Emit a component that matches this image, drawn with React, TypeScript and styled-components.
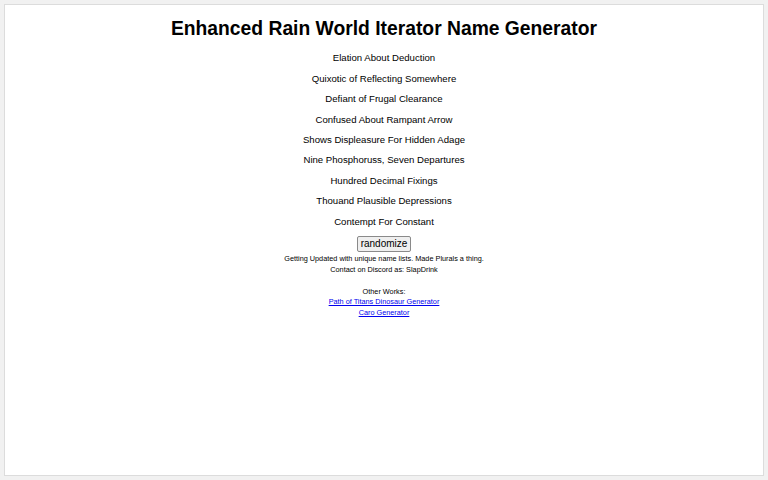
import React from "react";
import styled, { createGlobalStyle } from "styled-components";

const GlobalStyle = createGlobalStyle`
  html, body {
    margin: 0;
    padding: 0;
  }
  body {
    background: #f1f1f1;
    padding: 4px;
    font-family: "Liberation Sans", Arial, sans-serif;
    color: #000;
  }
`;

const Card = styled.main`
  box-sizing: border-box;
  height: calc(100vh - 8px);
  background: #fff;
  border: 1px solid #dcdcdc;
  padding-top: 12px;
  display: flex;
  flex-direction: column;
  align-items: center;
  text-align: center;
`;

const Title = styled.h1`
  margin: 0;
  font-size: 19.3px;
  line-height: 24px;
  font-weight: bold;
`;

const NameList = styled.div`
  margin-top: 7.3px;
  display: flex;
  flex-direction: column;
  align-items: center;
`;

const NameLine = styled.div`
  font-size: 9.6px;
  line-height: 20.4px;
`;

const Button = styled.button`
  margin-top: 4px;
  font-family: "Liberation Sans", Arial, sans-serif;
  font-size: 10px;
  line-height: 12px;
  padding: 1px 3px;
  color: #000;
  background: #efefef;
  border: 1px solid #8a8a8a;
  border-radius: 2px;
  cursor: pointer;
`;

const Note = styled.div<{ $gap?: number }>`
  margin-top: ${(p) => p.$gap ?? 0}px;
  font-size: 7.3px;
  line-height: 10.6px;
`;

const Link = styled.a`
  color: #0000ee;
  text-decoration: underline;
`;

const names = [
  "Elation About Deduction",
  "Quixotic of Reflecting Somewhere",
  "Defiant of Frugal Clearance",
  "Confused About Rampant Arrow",
  "Shows Displeasure For Hidden Adage",
  "Nine Phosphoruss, Seven Departures",
  "Hundred Decimal Fixings",
  "Thouand Plausible Depressions",
  "Contempt For Constant",
];

export default function App() {
  return (
    <>
      <GlobalStyle />
      <Card>
        <Title>Enhanced Rain World Iterator Name Generator</Title>
        <NameList>
          {names.map((n) => (
            <NameLine key={n}>{n}</NameLine>
          ))}
        </NameList>
        <Button type="button">randomize</Button>
        <Note $gap={2.5}>
          Getting Updated with unique name lists. Made Plurals a thing.
          <br />
          Contact on Discord as: SlapDrink
        </Note>
        <Note $gap={11}>
          Other Works:
          <br />
          <Link href="#">Path of Titans Dinosaur Generator</Link>
          <br />
          <Link href="#">Caro Generator</Link>
        </Note>
      </Card>
    </>
  );
}
